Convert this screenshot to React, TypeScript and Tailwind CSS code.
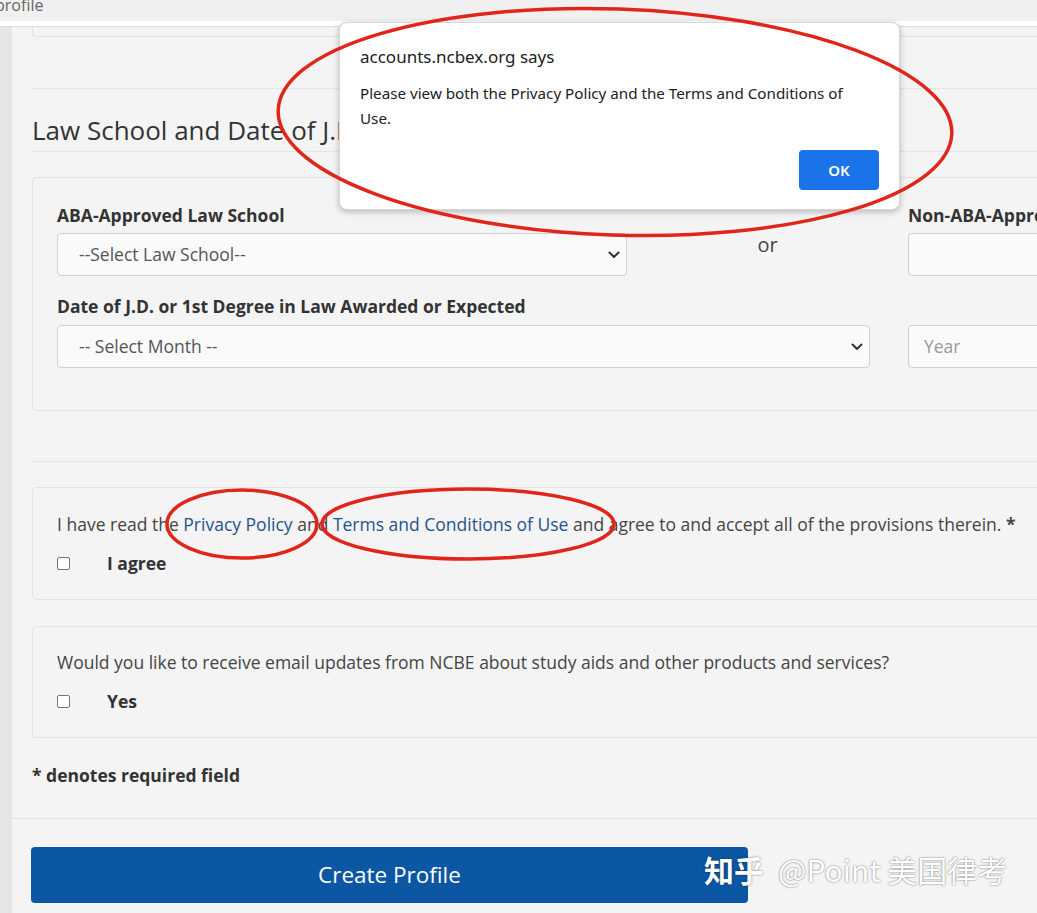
import React from 'react';

const Chevron = () => (
  <svg width="12" height="8" viewBox="0 0 12 8" className="shrink-0">
    <path d="M1.5 1.5 L6 6 L10.5 1.5" fill="none" stroke="#333" strokeWidth="2" strokeLinecap="round" strokeLinejoin="round" />
  </svg>
);

const Check = () => (
  <span className="inline-block w-[13px] h-[13px] rounded-[2px] border border-[#767676] bg-white shrink-0" />
);

export default function App() {
  return (
    <div className="relative w-[1037px] h-[913px] overflow-hidden bg-[#f4f4f4] text-[#333] font-['Open_Sans',sans-serif]">
      {/* browser top strip */}
      <div className="h-[21px] bg-[#f0f0f1] flex items-start overflow-hidden">
        <span className="-ml-[5px] -mt-[5px] text-[16px] leading-[20px] text-[#666]">profile</span>
      </div>
      <div className="h-[6px] bg-white border-b border-[#dcdcdc]" />

      <div className="flex">
        {/* left strip */}
        <div className="w-[12px] shrink-0 bg-[#e6e6e6] h-[900px]" />

        <div className="w-[1150px] shrink-0">
          <div className="pl-[20px]">
            {/* tail of previous card */}
            <div className="h-[10px] border-x border-b border-[#e0e0e0] rounded-b-[4px]" />

            <div className="mt-[51px] border-t border-[#e4e4e4]" />
            <h2 className="mt-[23px] text-[26px] leading-[36px] text-[#333] font-normal">Law School and Date of J.D.</h2>
            <div className="mt-[3px] border-t border-[#e4e4e4]" />

            {/* law school card */}
            <div className="mt-[25px] border border-[#e2e2e2] rounded-[4px] pl-[24px] pt-[25px] pb-[42px]">
              <div className="flex">
                <div className="w-[570px] shrink-0">
                  <div className="text-[17.5px] leading-[24px] font-bold">ABA-Approved Law School</div>
                  <div className="mt-[6px] h-[43px] border border-[#cfcfcf] rounded-[4px] bg-[#fafafa] flex items-center justify-between pl-[21px] pr-[6px] text-[17.5px] text-[#555]">
                    <span>--Select Law School--</span>
                    <Chevron />
                  </div>
                </div>
                <div className="w-[281px] shrink-0 text-center text-[20px] leading-[24px] pt-[30px] text-[#444]">or</div>
                <div className="flex-1">
                  <div className="text-[17.5px] leading-[24px] font-bold whitespace-nowrap">Non-ABA-Approved Law School</div>
                  <div className="mt-[6px] h-[43px] border border-[#cfcfcf] rounded-[4px] bg-[#fafafa]" />
                </div>
              </div>

              <div className="mt-[18px] flex gap-[38px]">
                <div className="w-[813px] shrink-0">
                  <div className="text-[17.5px] leading-[24px] font-bold">Date of J.D. or 1st Degree in Law Awarded or Expected</div>
                  <div className="mt-[7px] h-[43px] border border-[#cfcfcf] rounded-[4px] bg-[#fafafa] flex items-center justify-between pl-[21px] pr-[6px] text-[17.5px] text-[#555]">
                    <span>-- Select Month --</span>
                    <Chevron />
                  </div>
                </div>
                <div className="flex-1 pt-[31px]">
                  <div className="h-[43px] border border-[#cfcfcf] rounded-[4px] bg-[#fafafa] flex items-center pl-[15px] text-[17.5px] text-[#999]">Year</div>
                </div>
              </div>
            </div>

            <div className="mt-[50px] border-t border-[#e4e4e4]" />

            {/* agreement */}
            <div className="mt-[25px] border border-[#e2e2e2] rounded-[4px] pl-[24px] pt-[24px] pb-[24px]">
              <p className="text-[17.5px] leading-[24px] text-[#444] whitespace-nowrap">
                I have read the <span className="text-[#22548c]">Privacy Policy</span> and{' '}
                <span className="text-[#22548c]">Terms and Conditions of Use</span> and agree to and accept all of the provisions therein.{' '}
                <span className="font-bold">*</span>
              </p>
              <div className="mt-[15px] flex items-center h-[24px]">
                <Check />
                <span className="ml-[37px] text-[17.5px] font-bold text-[#333]">I agree</span>
              </div>
            </div>

            {/* email updates */}
            <div className="mt-[26px] border border-[#e2e2e2] rounded-[4px] pl-[24px] pt-[23px] pb-[24px]">
              <p className="text-[17.5px] leading-[24px] text-[#444] whitespace-nowrap">
                Would you like to receive email updates from NCBE about study aids and other products and services?
              </p>
              <div className="mt-[15px] flex items-center h-[24px]">
                <Check />
                <span className="ml-[37px] text-[17.5px] font-bold text-[#333]">Yes</span>
              </div>
            </div>

            <div className="mt-[25px] text-[17.5px] leading-[24px] font-bold text-[#333]">* denotes required field</div>
          </div>

          <div className="mt-[31px] border-t border-[#e0e0e0]" />

          <div className="pl-[19px] mt-[28px]">
            <button className="w-[717px] h-[56px] rounded-[4px] bg-[#0b57a4] text-white text-[22.5px]">Create Profile</button>
          </div>
        </div>
      </div>

      {/* alert dialog */}
      <div className="absolute left-[339px] top-[22px] w-[561px] h-[188px] bg-white rounded-[8px] border border-[#d6d6d6] shadow-[0_2px_6px_rgba(0,0,0,0.25)] font-['Noto_Sans',sans-serif] px-[20px]">
        <div className="mt-[22px] text-[17px] leading-[24px] text-[#202124]">accounts.ncbex.org says</div>
        <div className="mt-[12px] text-[15.2px] leading-[25px] text-[#202124] pr-[20px]">
          Please view both the Privacy Policy and the Terms and Conditions of Use.
        </div>
        <div className="mt-[19px] flex justify-end">
          <button className="w-[80px] h-[40px] rounded-[4px] bg-[#1a73e8] text-white text-[15px] font-semibold">OK</button>
        </div>
      </div>

      {/* red annotation ellipses */}
      <svg className="absolute inset-0 pointer-events-none" width="1037" height="913">
        <ellipse cx="615" cy="122" rx="337" ry="113" transform="rotate(2 615 122)" fill="none" stroke="#e0261b" strokeWidth="3.5" />
        <ellipse cx="242" cy="524" rx="75" ry="34" fill="none" stroke="#e0261b" strokeWidth="3.5" />
        <ellipse cx="468" cy="524" rx="146" ry="35" fill="none" stroke="#e0261b" strokeWidth="3.5" />
      </svg>

      {/* watermark */}
      <div className="absolute left-[704px] top-[850px] flex items-center gap-[14px] text-[30px] leading-[38px] text-white font-['Noto_Sans_CJK_SC',sans-serif] [text-shadow:0_0_2px_rgba(0,0,0,0.6)]">
        <span className="font-bold">知乎</span>
        <span>@Point 美国律考</span>
      </div>
    </div>
  );
}
